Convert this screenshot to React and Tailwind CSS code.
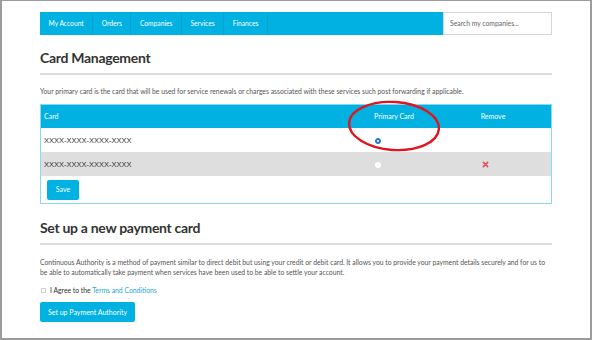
import React from 'react';

const navItems = ['My Account', 'Orders', 'Companies', 'Services', 'Finances'];

// Page for managing saved payment cards
function App() {
  return (
    <div className="w-[592px] h-[340px] bg-white border-l-2 border-t border-r-2 border-b-2 border-[#9c9c9c] overflow-hidden" style={{ fontFamily: 'Lato, "Open Sans", sans-serif' }}>
      <div className="relative ml-[38px] w-[512px] pt-[11px]">
        {/* Top navigation */}
        <div className="flex h-[23px]">
          <div className="flex flex-1 bg-[#00b1e2]">
            {navItems.map((item) => (
              <div key={item} className="flex items-center px-[8.5px] text-[6.7px] text-white border-r border-[#0aa2cf]">
                {item}
              </div>
            ))}
          </div>
          <div className="w-[109px] border border-[#d6d6d6] flex items-center pl-[6px] text-[6.8px] text-[#666]">
            Search my companies...
          </div>
        </div>

        {/* Card management */}
        <h1 className="mt-[11px] h-[24px] leading-[24px] text-[14px] tracking-[-0.3px] font-bold text-[#333]">Card Management</h1>
        <div className="mt-[3px] h-[2px] bg-[#dcdcdc]" />
        <p className="mt-[9px] h-[14px] leading-[14px] text-[6.8px] text-[#555]">
          Your primary card is the card that will be used for service renewals or charges associated with these services such post forwarding if applicable.
        </p>

        <div className="mt-[6px] border border-[#8ad8f3]">
          <div className="grid grid-cols-[312px_82px_116px] h-[23px] bg-[#00b1e2] text-white text-[7px] items-center">
            <div className="pl-[3px]">Card</div>
            <div className="text-center">Primary Card</div>
            <div className="text-center">Remove</div>
          </div>
          <div className="grid grid-cols-[312px_82px_116px] h-[24px] items-center text-[7.5px] text-[#333]" style={{ fontFamily: '"Liberation Sans", Arial, sans-serif' }}>
            <div className="pl-[3px] pt-[1px]">XXXX-XXXX-XXXX-XXXX</div>
            <div className="pl-[22px] pt-[2px]">
              <div className="w-[6px] h-[6px] rounded-full bg-[#2a7de1] border border-[#1f6fd0] flex items-center justify-center">
                <div className="w-[2px] h-[2px] rounded-full bg-white" />
              </div>
            </div>
            <div />
          </div>
          <div className="grid grid-cols-[312px_82px_116px] h-[24px] items-center text-[7.5px] text-[#333] bg-[#dedede]" style={{ fontFamily: '"Liberation Sans", Arial, sans-serif' }}>
            <div className="pl-[3px] pt-[1px]">XXXX-XXXX-XXXX-XXXX</div>
            <div className="pl-[22px] pt-[1px]">
              <div className="w-[6px] h-[6px] rounded-full bg-white" />
            </div>
            <div className="pl-[47px] pt-[1px]">
              <svg width="7" height="7" viewBox="0 0 10 10">
                <path d="M2 2 L8 8 M8 2 L2 8" stroke="#e8505b" strokeWidth="2.4" strokeLinecap="round" />
              </svg>
            </div>
          </div>
          <div className="h-[27px] flex items-center pl-[6px]">
            <button className="w-[32px] h-[20px] rounded-[2px] bg-[#00b1e2] text-white text-[7px]">Save</button>
          </div>
        </div>

        {/* New payment card */}
        <h2 className="mt-[12px] h-[24px] leading-[24px] text-[14px] tracking-[-0.3px] font-bold text-[#333]">Set up a new payment card</h2>
        <div className="mt-[3px] h-[2px] bg-[#dcdcdc]" />
        <p className="mt-[12px] leading-[10px] text-[6.8px] text-[#555]">
          Continuous Authority is a method of payment similar to direct debit but using your credit or debit card. It allows you to provide your payment details securely and for us to be able to automatically take payment when services have been used to be able to settle your account.
        </p>
        <div className="mt-[7px] h-[12px] flex items-center text-[6.8px] text-[#333]">
          <div className="ml-[1px] w-[5px] h-[5px] border border-[#cfcfcf] mr-[4px]" />
          <span>I Agree to the <span className="text-[#1aa9d8]">Terms and Conditions</span></span>
        </div>
        <button className="mt-[6px] w-[95px] h-[20px] rounded-[2px] bg-[#00b1e2] text-white text-[7px]">Set up Payment Authority</button>

        {/* Red annotation ellipse around Primary Card */}
        <svg className="absolute left-[299px] top-[95px] pointer-events-none" width="110" height="60" viewBox="0 0 110 60">
          <ellipse cx="55" cy="30" rx="45" ry="24" fill="none" stroke="#e1141c" strokeWidth="2.4" transform="rotate(4 55 30)" />
        </svg>
      </div>
    </div>
  );
}

export default App;
